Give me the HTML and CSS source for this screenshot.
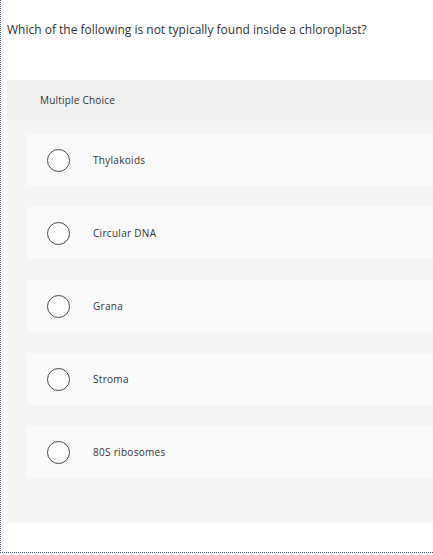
FILE: index.html
```html
<!DOCTYPE html>
<html lang="en">
<head>
    <meta charset="UTF-8">
    <meta name="viewport" content="width=device-width, initial-scale=1.0">
    <title>Question</title>
    <link rel="stylesheet" href="styles.css">
</head>
<body>
    <div class="frame">
        <p class="question">Which of the following is not typically found inside a chloroplast?</p>
        <div class="panel">
            <div class="panel-head">Multiple Choice</div>
            <div class="choices">
                <label class="choice"><span class="radio"></span><span class="choice-text">Thylakoids</span></label>
                <label class="choice"><span class="radio"></span><span class="choice-text">Circular DNA</span></label>
                <label class="choice"><span class="radio"></span><span class="choice-text">Grana</span></label>
                <label class="choice"><span class="radio"></span><span class="choice-text">Stroma</span></label>
                <label class="choice"><span class="radio"></span><span class="choice-text">80S ribosomes</span></label>
            </div>
        </div>
    </div>
</body>
</html>
```

FILE: styles.css
```css
body {
    margin: 0;
    padding: 0;
    background-color: #fff;
    font-family: "Open Sans", Arial, sans-serif;
    color: #333;
}
.frame {
    height: 552px;
    padding-left: 6px;
    border-left: 1px dotted #4a5a70;
    border-bottom: 1px dotted #4a5a70;
    overflow: hidden;
}
.question {
    margin: 0;
    padding-top: 22px;
    height: 80px;
    box-sizing: border-box;
    font-size: 12px;
    line-height: 16px;
}
.panel {
    background-color: #f5f5f5;
    height: 443px;
}
.panel-head {
    height: 40px;
    line-height: 40px;
    padding-left: 33px;
    background-color: #f0f0f0;
    font-size: 10px;
    letter-spacing: 0.2px;
}
.choices {
    display: flex;
    flex-direction: column;
    gap: 21px;
    padding: 14px 0 0 20px;
}
.choice {
    display: flex;
    align-items: center;
    height: 52px;
    padding-left: 20px;
    background-color: #fafafa;
}
.radio {
    width: 21px;
    height: 21px;
    border: 1.5px solid #3d4a5c;
    border-radius: 50%;
    background-color: #fff;
    margin-right: 23px;
    flex-shrink: 0;
}
.choice-text {
    font-size: 10px;
    letter-spacing: 0.3px;
}
```
